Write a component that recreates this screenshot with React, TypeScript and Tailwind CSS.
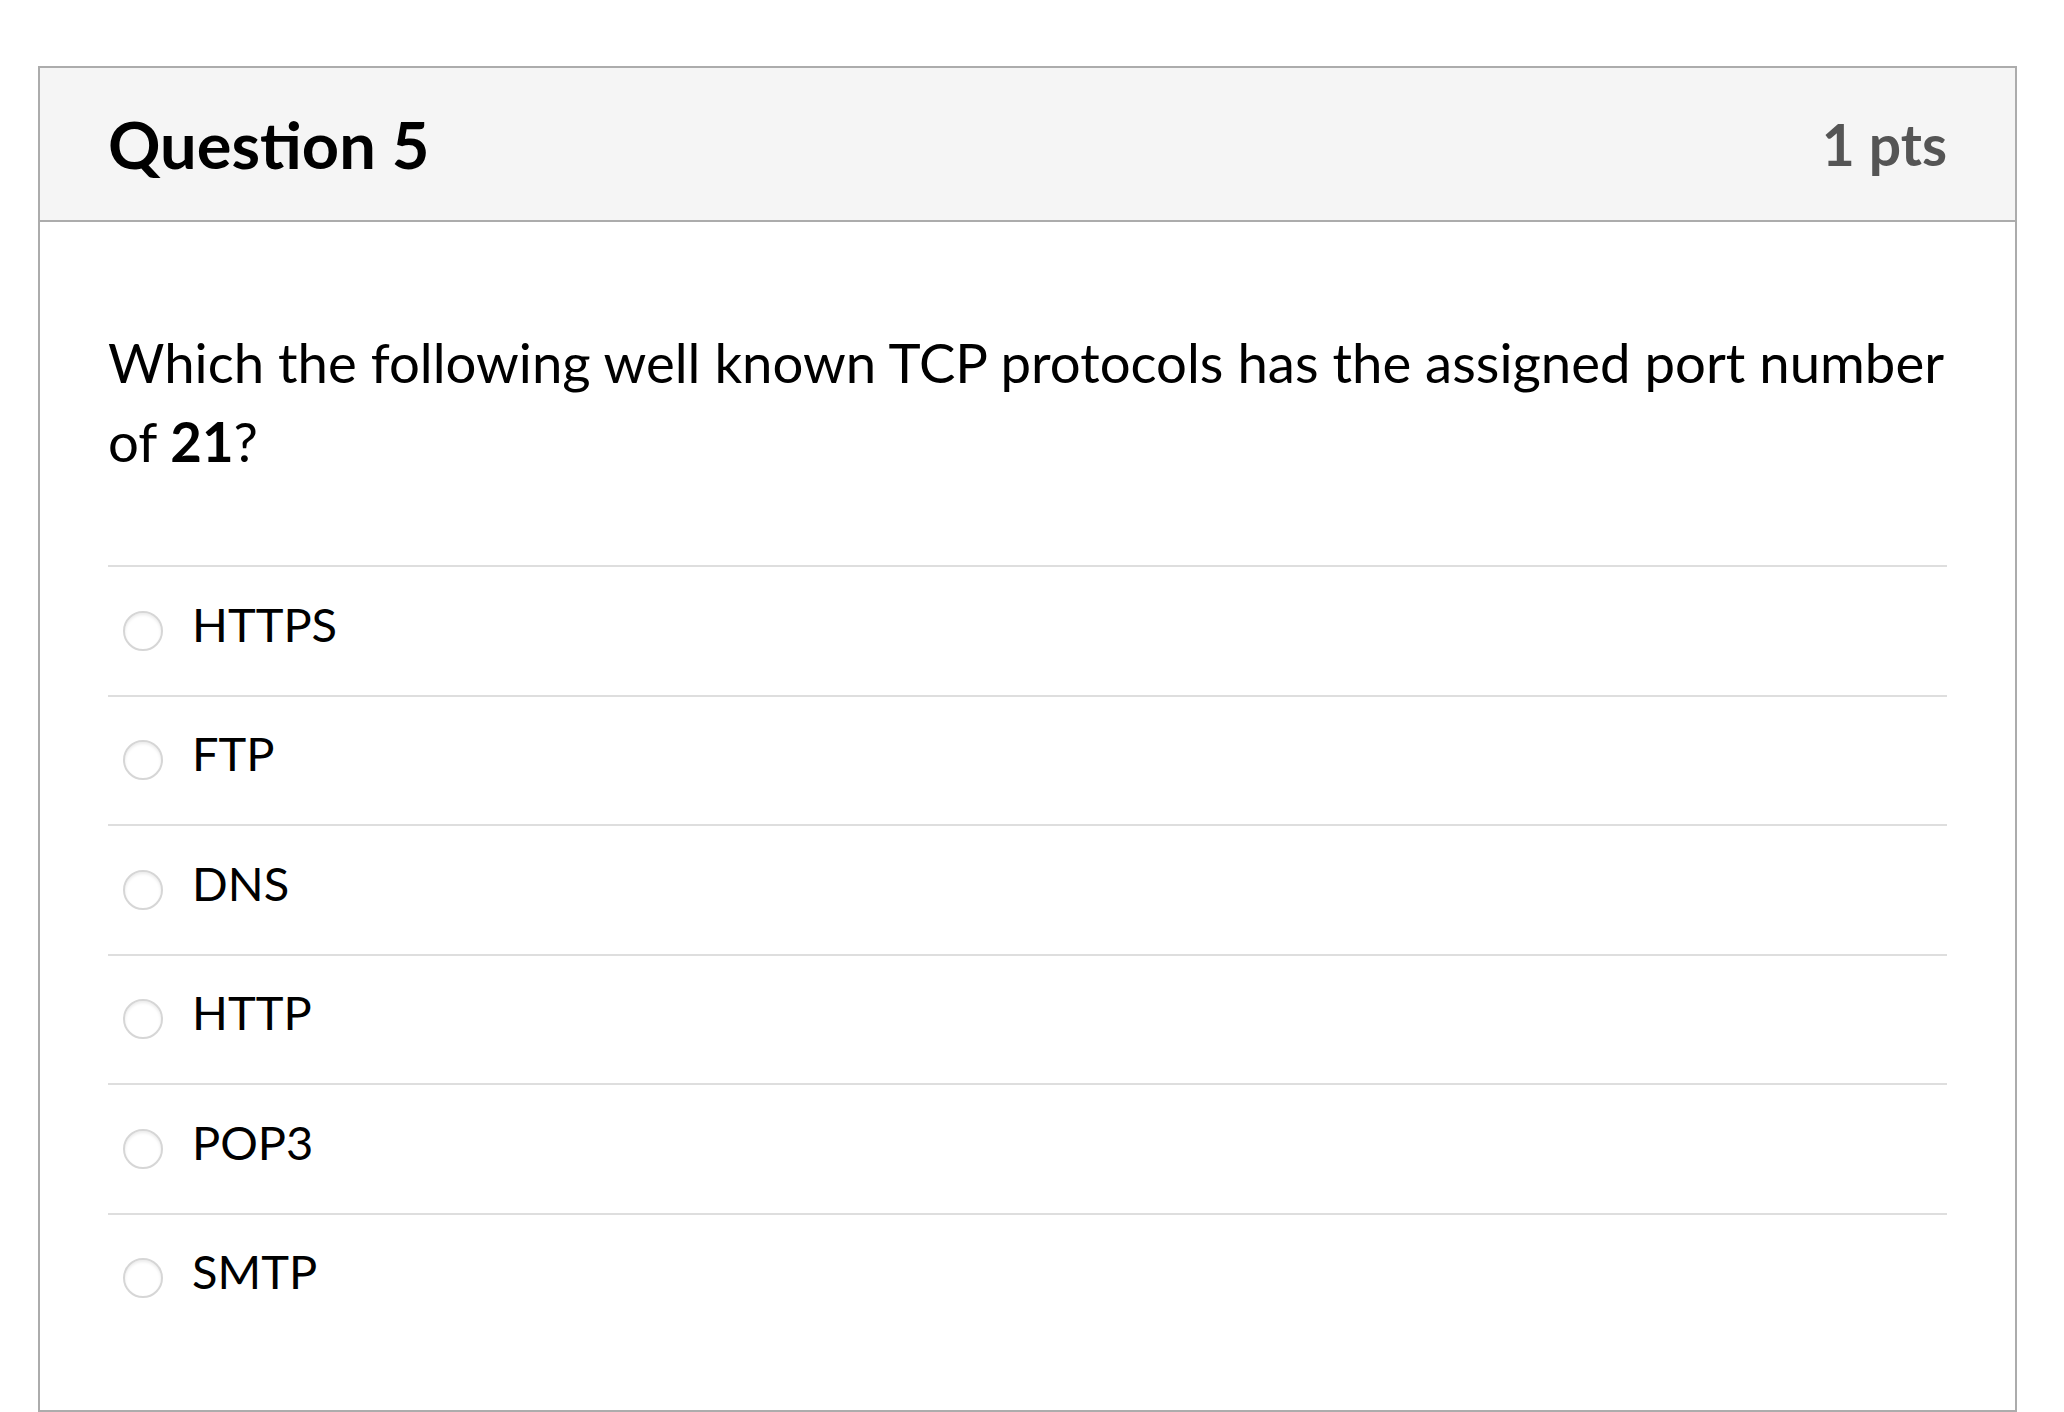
const answers = ['HTTPS', 'FTP', 'DNS', 'HTTP', 'POP3', 'SMTP']

function Radio() {
  return (
    <span className="w-[40px] h-[40px] rounded-full border-2 border-[#d6d6d6] bg-white shadow-[inset_0_2px_3px_rgba(0,0,0,0.08)] shrink-0" />
  )
}

export default function App() {
  return (
    <div className="min-h-[1412px] bg-white pt-[66px] pl-[38px] font-['Lato','Liberation_Sans',sans-serif] text-black">
      <div className="w-[1979px] h-[1346px] border-2 border-[#acacac] flex flex-col">
        <header className="h-[154px] shrink-0 bg-[#f5f5f5] border-b-2 border-[#acacac] px-[68px] flex items-center justify-between">
          <h2 className="text-[65px] font-bold leading-none">Question 5</h2>
          <span className="text-[57px] font-bold text-[#555555] leading-none">1 pts</span>
        </header>

        <div className="px-[68px] pt-[101px]">
          <p className="text-[54.5px] leading-[79px]">
            Which the following well known TCP protocols has the assigned port number of <b className="font-bold">21</b>?
          </p>

          <div className="mt-[84px]">
            {answers.map((a) => (
              <div key={a} className="h-[129.5px] border-t-2 border-[#dedede] flex items-center pl-[15px] gap-[29px]">
                <Radio />
                <span className="text-[47px] leading-none mb-[13px]">{a}</span>
              </div>
            ))}
          </div>
        </div>
      </div>
    </div>
  )
}
